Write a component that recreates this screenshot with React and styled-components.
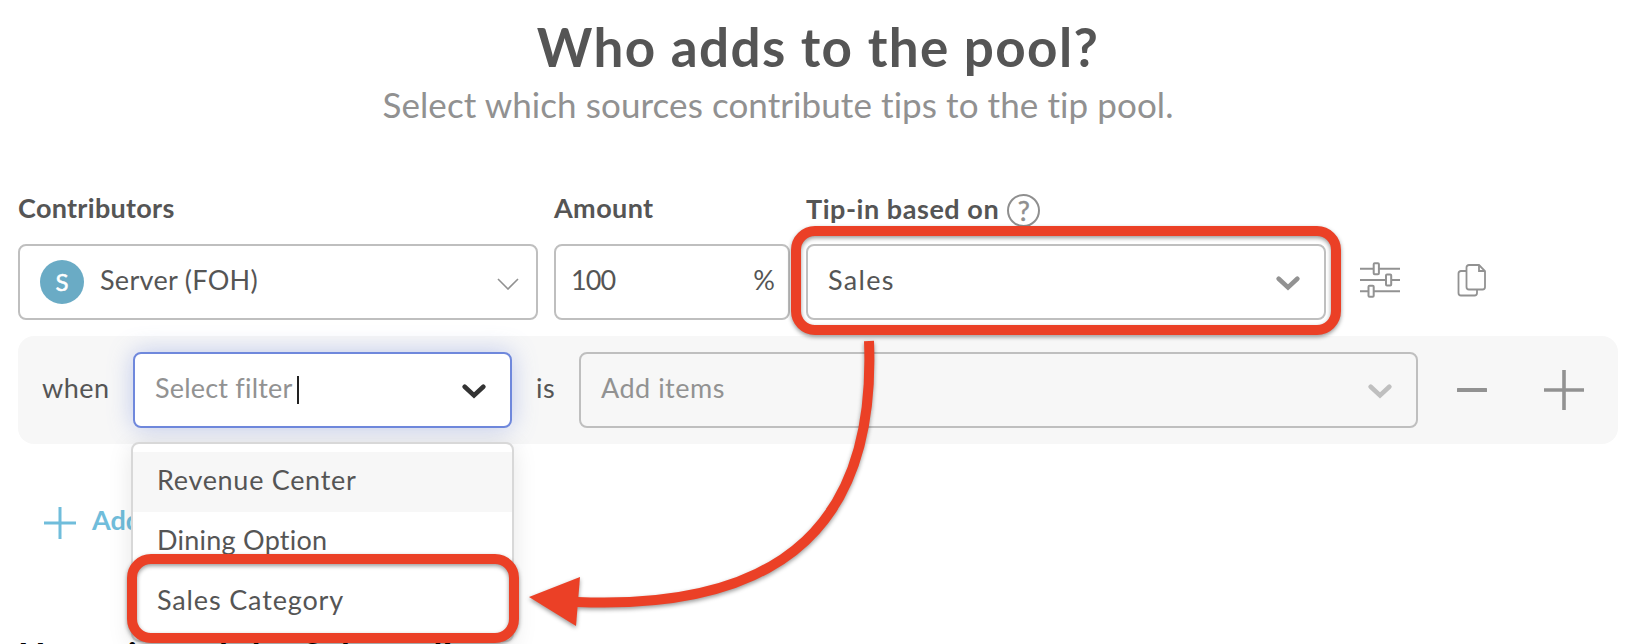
import React from 'react';
import styled, { createGlobalStyle, css } from 'styled-components';

const GlobalStyle = createGlobalStyle`
  * {
    box-sizing: border-box;
  }
  body {
    margin: 0;
    background: #ffffff;
  }
  svg {
    flex-shrink: 0;
  }
`;

const Page = styled.div`
  position: relative;
  width: 1636px;
  height: 644px;
  overflow: hidden;
  padding: 17px 18px 0;
  color: #555555;
  font-family: Lato, 'Open Sans', sans-serif;
  font-size: 27px;
  font-variant-ligatures: none;
`;

const Title = styled.h1`
  margin: 0;
  height: 60px;
  line-height: 60px;
  text-align: center;
  font-size: 53px;
  font-weight: 700;
  letter-spacing: 1.35px;
`;

const Subtitle = styled.p`
  margin: 5px 0 0;
  padding-right: 80px;
  line-height: 44px;
  text-align: center;
  font-size: 35px;
  letter-spacing: 0.08px;
  color: #919191;
`;

const Fields = styled.div`
  display: grid;
  grid-template-columns: 520px 236px 520px 40px 31px;
  column-gap: 16px;
  margin-top: 66px;
`;

const Field = styled.div`
  position: relative;
`;

const Label = styled.div`
  display: flex;
  height: 52px;
  padding-top: ${p => p.$top || 0}px;
  line-height: 32px;
  font-weight: 700;
  letter-spacing: ${p => p.$spacing}px;
`;

const Text = styled.span`
  padding-bottom: 5px;
  letter-spacing: ${p => p.$spacing || 0}px;
  white-space: nowrap;
`;

const Box = styled.div`
  position: relative;
  display: flex;
  align-items: center;
  height: 76px;
  padding: 0 ${p => p.$right || 24}px 0 ${p => p.$left || 20}px;
  border: 2px solid #bfbfbf;
  border-radius: 8px;
  background: ${p => (p.$disabled ? '#f7f7f7' : '#ffffff')};
  color: ${p => (p.$muted ? '#929292' : '#555555')};
  ${p => p.$focused && css`
    border-color: #6f88dc;
    box-shadow: 0 0 24px rgba(111, 136, 220, 0.42);
  `}
`;

const Spacer = styled.div`
  flex: 1;
`;

const Avatar = styled.div`
  width: 44px;
  height: 44px;
  margin: 0 16px 0 0;
  border-radius: 50%;
  background: #6aabc5;
  color: #ffffff;
  font-size: 24px;
  line-height: 44px;
  text-align: center;
  -webkit-text-stroke: 0.5px #ffffff;
`;

const Help = styled.div`
  width: 33px;
  height: 33px;
  margin: 1px 0 0 8px;
  border: 2px solid #8f8f8f;
  border-radius: 50%;
  color: #8f8f8f;
  font-size: 27px;
  line-height: 29px;
  text-align: center;
  letter-spacing: 0;
  font-weight: 400;
  -webkit-text-stroke: 0.5px #8f8f8f;
`;

const IconCell = styled.div`
  display: flex;
  align-items: center;
  height: 72px;
  margin: 52px 0 0 ${p => p.$left}px;
`;

const Condition = styled.div`
  display: grid;
  grid-template-columns: 115px 379px 67px 839px 69px 136px;
  align-items: center;
  height: 108px;
  margin-top: 16px;
  border-radius: 16px;
  background: #f7f7f7;
  & > svg {
    margin-left: 39px;
  }
  & > svg + svg {
    margin-left: 57px;
  }
`;

const Word = styled(Text)`
  padding-left: ${p => p.$left}px;
`;

const Caret = styled.span`
  width: 2px;
  height: 28px;
  margin-left: 4px;
  background: #222222;
`;

const Menu = styled.ul`
  position: absolute;
  top: 90px;
  left: -2px;
  z-index: 2;
  width: 383px;
  margin: 0;
  padding: 8px 0;
  list-style: none;
  border: 2px solid #d8d8d8;
  border-radius: 8px;
  background: #ffffff;
  box-shadow: 0 4px 24px rgba(0, 0, 0, 0.1);
`;

const Option = styled.li`
  display: flex;
  align-items: center;
  height: 60px;
  padding-left: 24px;
  background: ${p => (p.$active ? '#f7f7f7' : 'transparent')};
`;

const AddLink = styled.div`
  display: flex;
  align-items: center;
  gap: 16px;
  height: 32px;
  margin-top: 60px;
  padding-left: 26px;
  color: #70bddb;
  font-weight: 700;
  & > svg {
    margin-top: 6px;
  }
`;

const AddText = styled(Text)`
  padding-bottom: 1px;
`;

const NextTitle = styled.h2`
  margin: 97px 0 0;
  color: #000000;
  font-size: 36px;
  line-height: 44px;
  letter-spacing: 0.6px;
`;

const Highlight = styled.div`
  position: absolute;
  z-index: 3;
  top: ${p => p.$top}px;
  left: ${p => p.$left}px;
  width: ${p => p.$width}px;
  height: ${p => p.$height}px;
  border: 10px solid #eb4026;
  border-radius: 24px;
  filter: drop-shadow(0 2px 2px rgba(0, 0, 0, 0.4));
`;

const ArrowLayer = styled.svg`
  position: absolute;
  top: 330px;
  left: 520px;
  z-index: 3;
  filter: drop-shadow(0 2px 2px rgba(0, 0, 0, 0.4));
`;

const ChevronIcon = styled.svg`
  margin-top: 3px;
`;

const Chevron = ({ color }) => (
  <ChevronIcon width="24" height="15" viewBox="0 0 24 15" fill="none">
    <path d="M2.7 2.8L12 11.4L21.3 2.8" stroke={color} strokeWidth="4.6" strokeLinecap="round" />
  </ChevronIcon>
);

const ThinChevron = () => (
  <ChevronIcon width="22" height="12" viewBox="0 0 22 12" fill="none">
    <path d="M1 1L11 11L21 1" stroke="#919191" strokeWidth="1.6" />
  </ChevronIcon>
);

const SlidersIcon = () => (
  <svg width="40" height="36" viewBox="0 0 40 36" fill="none" stroke="#929292" strokeWidth="2">
    <path d="M0 6.7H13M19 6.7H40M0 18H26M31 18H40M0 29.3H8M14 29.3H40" />
    <rect x="13.7" y="1.2" width="5.2" height="11" rx="1" />
    <rect x="26" y="12.5" width="5.2" height="11" rx="1" />
    <rect x="8.5" y="23.8" width="5.2" height="11" rx="1" />
  </svg>
);

const CopyIcon = () => (
  <svg width="30" height="34" viewBox="0 0 30 34" fill="none" stroke="#929292" strokeWidth="1.8">
    <path d="M9.5 8H4C2.5 8 1.5 9 1.5 10.5V30C1.5 31.5 2.5 32.5 4 32.5H17.5C19 32.5 20 31.5 20 30V27" />
    <path d="M12 2H22L28 8V24C28 25.5 27 26.5 25.5 26.5H12C10.5 26.5 9.5 25.5 9.5 24V4.5C9.5 3 10.5 2 12 2Z" />
    <path d="M22 2V8H28" />
  </svg>
);

const MinusIcon = () => (
  <svg width="30" height="4" viewBox="0 0 30 4">
    <rect width="30" height="4" rx="0.5" fill="#929292" />
  </svg>
);

const PlusIcon = ({ width, height, weight, color }) => (
  <svg width={width} height={height} viewBox={`0 0 ${width} ${height}`}>
    <path
      d={`M0 ${height / 2}H${width}M${width / 2} 0V${height}`}
      stroke={color}
      strokeWidth={weight}
    />
  </svg>
);

const options = [
  { name: 'Revenue Center', spacing: 0.7 },
  { name: 'Dining Option', spacing: 0.25 },
  { name: 'Sales Category', spacing: 0.85 }
];

const App = () => (
  <>
    <GlobalStyle />
    <Page>
      <Title>Who adds to the pool?</Title>
      <Subtitle>Select which sources contribute tips to the tip pool.</Subtitle>

      <Fields>
        <Field>
          <Label $spacing={0.3}>Contributors</Label>
          <Box $right={17}>
            <Avatar>S</Avatar>
            <Text $spacing={0.3}>Server (FOH)</Text>
            <Spacer />
            <ThinChevron />
          </Box>
        </Field>
        <Field>
          <Label $spacing={0.4}>Amount</Label>
          <Box $left={15} $right={13}>
            <Text $spacing={-0.9}>100</Text>
            <Spacer />
            <Text>%</Text>
          </Box>
        </Field>
        <Field>
          <Label $spacing={0.55} $top={1}>
            Tip-in based on
            <Help>?</Help>
          </Label>
          <Box>
            <Text $spacing={1.3}>Sales</Text>
            <Spacer />
            <Chevron color="#929292" />
          </Box>
          <Highlight $top={34} $left={-15} $width={550} $height={109} />
        </Field>
        <IconCell $left={18}>
          <SlidersIcon />
        </IconCell>
        <IconCell $left={59}>
          <CopyIcon />
        </IconCell>
      </Fields>

      <Condition>
        <Word $left={24} $spacing={0.5}>when</Word>
        <Field>
          <Box $focused $muted>
            <Text $spacing={0.2}>Select filter</Text>
            <Caret />
            <Spacer />
            <Chevron color="#333333" />
          </Box>
          <Menu>
            {options.map((option, i) => (
              <Option key={option.name} $active={i === 0}>
                <Text $spacing={option.spacing}>{option.name}</Text>
              </Option>
            ))}
          </Menu>
          <Highlight $top={202} $left={-6} $width={392} $height={89} />
        </Field>
        <Word $left={24} $spacing={0.4}>is</Word>
        <Box $disabled $muted>
          <Text $spacing={0.5}>Add items</Text>
          <Spacer />
          <Chevron color="#bfbfbf" />
        </Box>
        <MinusIcon />
        <PlusIcon width={40} height={40} weight={3.6} color="#929292" />
      </Condition>

      <AddLink>
        <PlusIcon width={32} height={32} weight={3} color="#70bddb" />
        <AddText>Add</AddText>
      </AddLink>
      <NextTitle>Hours in and the Sales split</NextTitle>

      <ArrowLayer width="370" height="310" viewBox="520 330 370 310" fill="none">
        <path d="M869 341C876 517 790 611 577 602" stroke="#eb4026" strokeWidth="10" />
        <path d="M529 597L580 577L576 626Z" fill="#eb4026" />
      </ArrowLayer>
    </Page>
  </>
);

export default App;
